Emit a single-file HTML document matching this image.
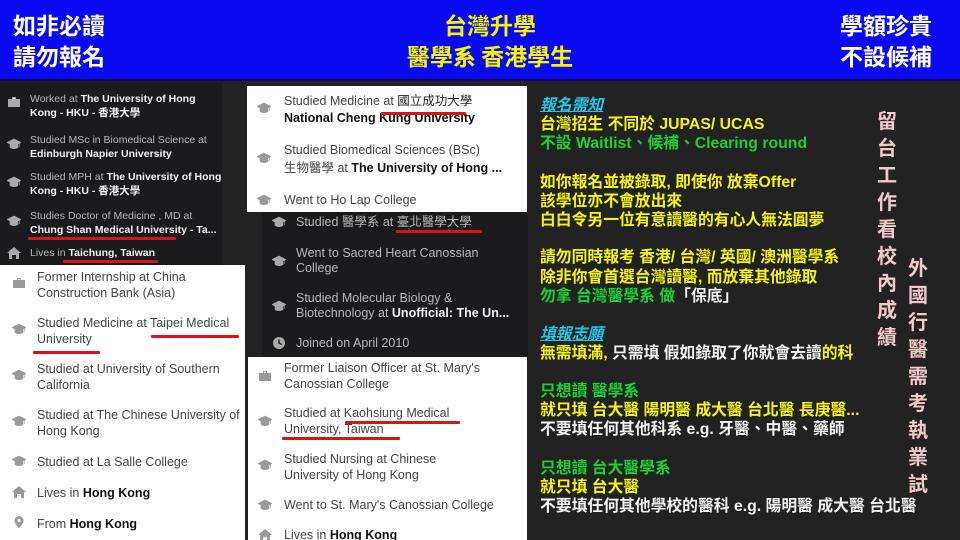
<!DOCTYPE html>
<html><head><meta charset="utf-8"><style>
*{margin:0;padding:0;box-sizing:border-box}
body{width:960px;height:540px;background:#222222;position:relative;overflow:hidden;font-family:"Liberation Sans","Noto Sans CJK TC",sans-serif}
.hdr{position:absolute;left:0;top:0;width:960px;height:81px;background:#0a0af2;border-bottom:2px solid #0a0a60}
.h{position:absolute;font-weight:bold;font-size:23px;line-height:31px;font-family:"Noto Sans CJK TC",sans-serif}
.p{position:absolute;overflow:hidden}
.dark{background:#1b1b1d;color:#b8b8b8}
.white{background:#fff;color:#444}
.it{position:absolute;font-size:12.5px;line-height:16px}
.dark b{color:#f2f2f2}
.white b{color:#111}
.ic{position:absolute;width:14px;height:12px}
.u{position:absolute;height:2.5px;background:#d8141a;border-radius:1px}
.t{position:absolute;left:540px;font-weight:bold;font-size:15.8px;line-height:19px;white-space:nowrap;font-family:"Liberation Sans","Noto Sans CJK TC",sans-serif}
.y{color:#f5f50a}.g{color:#19d230}.w{color:#f2f2f2}.c{color:#1fc8e8;font-style:italic;text-decoration:underline}
.v{position:absolute;width:24px;color:#f2c9c9;font-weight:bold;font-size:20px;line-height:27px;text-align:center;font-family:"Noto Sans CJK TC",sans-serif}
</style></head><body>
<div class="hdr"></div>
<div class="h" style="left:13px;top:9px;color:#fff">如非必讀<br>請勿報名</div>
<div class="h" style="left:385px;top:9px;width:210px;text-align:center;color:#f5f500">台灣升學<br>醫學系 香港學生</div>
<div class="h" style="left:840px;top:9px;color:#fff">學額珍貴<br>不設候補</div>

<svg width="0" height="0" style="position:absolute"><defs>
<symbol id="cap" viewBox="0 0 14 12"><path d="M7 1 L14 4.5 L7 8 L0 4.5Z M3 6.5 V9.5 Q7 12 11 9.5 V6.5 L7 8.5Z M12.5 5 V9" fill="currentColor" stroke="currentColor" stroke-width="0.6"/></symbol>
<symbol id="bag" viewBox="0 0 14 12"><path d="M5 1h4v2h4v8H1V3h4z" fill="currentColor"/><rect x="6" y="1.8" width="2" height="1.2" fill="#fff"/></symbol>
<symbol id="home" viewBox="0 0 14 12"><path d="M7 0L14 6h-2v6H9V8H5v4H2V6H0z" fill="currentColor"/></symbol>
<symbol id="pin" viewBox="0 0 14 12"><path d="M7 0a4.5 4.5 0 0 1 4.5 4.5C11.5 8 7 12 7 12S2.5 8 2.5 4.5A4.5 4.5 0 0 1 7 0z" fill="currentColor"/><circle cx="7" cy="4.5" r="1.6" fill="#fff"/></symbol>
<symbol id="clk" viewBox="0 0 14 12"><circle cx="7" cy="6" r="6" fill="currentColor"/><path d="M7 2.5V6l2.5 1.5" stroke="#1b1b1d" stroke-width="1.4" fill="none"/></symbol>
</defs></svg>

<div class="p dark" style="left:0;top:82px;width:222px;height:183px">
<svg class="ic" style="left:7px;top:14px;color:#aaa"><use href="#bag"/></svg>
<div class="it" style="left:30px;top:10px;font-size:10.5px;line-height:14px">Worked at <b>The University of Hong Kong - HKU - 香港大學</b></div>
<svg class="ic" style="left:7px;top:56px;color:#aaa"><use href="#cap"/></svg>
<div class="it" style="left:30px;top:51px;font-size:10.5px;line-height:14px">Studied MSc in Biomedical Science at <b>Edinburgh Napier University</b></div>
<svg class="ic" style="left:7px;top:94px;color:#aaa"><use href="#cap"/></svg>
<div class="it" style="left:30px;top:88px;font-size:10.5px;line-height:14px">Studied MPH at <b>The University of Hong Kong - HKU - 香港大學</b></div>
<svg class="ic" style="left:7px;top:133px;color:#aaa"><use href="#cap"/></svg>
<div class="it" style="left:30px;top:127px;font-size:10.5px;line-height:14px;white-space:nowrap">Studies Doctor of Medicine , MD at<br><b>Chung Shan Medical University - Ta...</b></div>
<div class="u" style="left:28px;top:155px;width:148px"></div>
<svg class="ic" style="left:7px;top:165px;color:#aaa"><use href="#home"/></svg>
<div class="it" style="left:30px;top:164px;font-size:10.5px;line-height:14px">Lives in <b>Taichung, Taiwan</b></div>
<div class="u" style="left:63px;top:178px;width:95px"></div>
</div>

<div class="p white" style="left:247px;top:86px;width:280px;height:126px">
<svg class="ic" style="left:10px;top:16px;color:#999"><use href="#cap"/></svg>
<div class="it" style="left:37px;top:7px;line-height:17px">Studied Medicine at <b style="font-weight:normal;color:#222">國立成功大學</b><br><b>National Cheng Kung University</b></div>
<div class="u" style="left:134px;top:26px;width:85px"></div>
<svg class="ic" style="left:10px;top:66px;color:#999"><use href="#cap"/></svg>
<div class="it" style="left:37px;top:55px;line-height:18px;white-space:nowrap">Studied Biomedical Sciences (BSc)<br>生物醫學 at <b>The University of Hong ...</b></div>
<svg class="ic" style="left:10px;top:108px;color:#999"><use href="#cap"/></svg>
<div class="it" style="left:37px;top:106px">Went to Ho Lap College</div>
</div>

<div class="p dark" style="left:262px;top:212px;width:266px;height:145px">
<svg class="ic" style="left:10px;top:4px;color:#aaa"><use href="#cap"/></svg>
<div class="it" style="left:34px;top:2px">Studied 醫學系 at 臺北醫學大學</div>
<div class="u" style="left:134px;top:18px;width:86px"></div>
<svg class="ic" style="left:10px;top:43px;color:#aaa"><use href="#cap"/></svg>
<div class="it" style="left:34px;top:34px;line-height:15px">Went to Sacred Heart Canossian<br>College</div>
<svg class="ic" style="left:10px;top:88px;color:#aaa"><use href="#cap"/></svg>
<div class="it" style="left:34px;top:79px;line-height:15px;white-space:nowrap">Studied Molecular Biology &amp;<br>Biotechnology at <b>Unofficial: The Un...</b></div>
<svg class="ic" style="left:10px;top:125px;color:#aaa"><use href="#clk"/></svg>
<div class="it" style="left:34px;top:123px">Joined on April 2010</div>
</div>

<div class="p white" style="left:0;top:265px;width:245px;height:275px">
<svg class="ic" style="left:12px;top:12px;color:#999"><use href="#bag"/></svg>
<div class="it" style="left:37px;top:5px;line-height:15.5px">Former Internship at China<br>Construction Bank (Asia)</div>
<svg class="ic" style="left:12px;top:58px;color:#999"><use href="#cap"/></svg>
<div class="it" style="left:37px;top:51px;line-height:15.5px">Studied Medicine at Taipei Medical<br>University</div>
<div class="u" style="left:151px;top:70px;width:88px"></div>
<div class="u" style="left:33px;top:86px;width:67px"></div>
<svg class="ic" style="left:12px;top:104px;color:#999"><use href="#cap"/></svg>
<div class="it" style="left:37px;top:97px;line-height:15.5px">Studied at University of Southern<br>California</div>
<svg class="ic" style="left:12px;top:150px;color:#999"><use href="#cap"/></svg>
<div class="it" style="left:37px;top:143px;line-height:15.5px;white-space:nowrap">Studied at The Chinese University of<br>Hong Kong</div>
<svg class="ic" style="left:12px;top:190px;color:#999"><use href="#cap"/></svg>
<div class="it" style="left:37px;top:189px">Studied at La Salle College</div>
<svg class="ic" style="left:12px;top:221px;color:#999"><use href="#home"/></svg>
<div class="it" style="left:37px;top:220px">Lives in <b>Hong Kong</b></div>
<svg class="ic" style="left:12px;top:251px;color:#999"><use href="#pin"/></svg>
<div class="it" style="left:37px;top:251px">From <b>Hong Kong</b></div>
</div>

<div class="p white" style="left:248px;top:357px;width:279px;height:183px">
<svg class="ic" style="left:10px;top:13px;color:#999"><use href="#bag"/></svg>
<div class="it" style="left:36px;top:4px;line-height:15.5px">Former Liaison Officer at St. Mary's<br>Canossian College</div>
<svg class="ic" style="left:10px;top:58px;color:#999"><use href="#cap"/></svg>
<div class="it" style="left:36px;top:49px;line-height:15.5px">Studied at Kaohsiung Medical<br>University, Taiwan</div>
<div class="u" style="left:97px;top:64px;width:115px"></div>
<div class="u" style="left:34px;top:80px;width:118px"></div>
<svg class="ic" style="left:10px;top:102px;color:#999"><use href="#cap"/></svg>
<div class="it" style="left:36px;top:95px;line-height:15.5px">Studied Nursing at Chinese<br>University of Hong Kong</div>
<svg class="ic" style="left:10px;top:142px;color:#999"><use href="#cap"/></svg>
<div class="it" style="left:36px;top:140px">Went to St. Mary's Canossian College</div>
<svg class="ic" style="left:10px;top:172px;color:#999"><use href="#home"/></svg>
<div class="it" style="left:36px;top:170px">Lives in <b>Hong Kong</b></div>
</div>

<div class="t c" style="top:96px">報名需知</div>
<div class="t y" style="top:115px">台灣招生 不同於 JUPAS/ UCAS</div>
<div class="t g" style="top:134px">不設 Waitlist、候補、Clearing round</div>
<div class="t y" style="top:173px">如你報名並被錄取, 即使你 放棄Offer</div>
<div class="t y" style="top:192px">該學位亦不會放出來</div>
<div class="t y" style="top:211px">白白令另一位有意讀醫的有心人無法圓夢</div>
<div class="t y" style="top:248px">請勿同時報考 香港/ 台灣/ 英國/ 澳洲醫學系</div>
<div class="t y" style="top:268px">除非你會首選台灣讀醫, 而放棄其他錄取</div>
<div class="t g" style="top:287px">勿拿 台灣醫學系 做<span class="w">「保底」</span></div>
<div class="t c" style="top:325px">填報志願</div>
<div class="t y" style="top:344px">無需填滿, <span class="w">只需填 假如錄取了你就會去讀</span>的科</div>
<div class="t g" style="top:382px">只想讀 醫學系</div>
<div class="t y" style="top:401px">就只填 台大醫 陽明醫 成大醫 台北醫 長庚醫...</div>
<div class="t w" style="top:420px">不要填任何其他科系 e.g. 牙醫、中醫、藥師</div>
<div class="t g" style="top:459px">只想讀 台大醫學系</div>
<div class="t y" style="top:478px">就只填 台大醫</div>
<div class="t w" style="top:497px">不要填任何其他學校的醫科 e.g. 陽明醫 成大醫 台北醫</div>

<div class="v" style="left:875px;top:106px">留<br>台<br>工<br>作<br>看<br>校<br>內<br>成<br>績</div>
<div class="v" style="left:906px;top:253px">外<br>國<br>行<br>醫<br>需<br>考<br>執<br>業<br>試</div>
</body></html>
